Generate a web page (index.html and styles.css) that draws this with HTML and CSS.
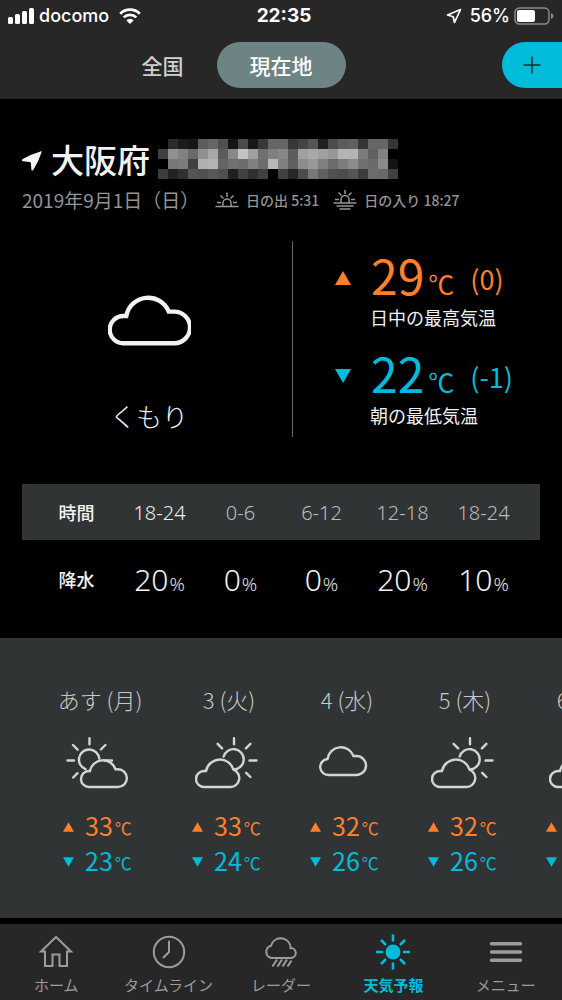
FILE: index.html
```html
<!DOCTYPE html>
<html lang="ja">
<head>
<meta charset="utf-8">
<meta name="viewport" content="width=device-width, initial-scale=1">
<title>天気予報</title>
<link rel="stylesheet" href="styles.css">
</head>
<body>
<svg class="defs" aria-hidden="true">
  <symbol id="cloud-behind-sun" viewBox="3 -1 68 54">
    <g fill="none" stroke="currentColor" stroke-width="2.4" stroke-linecap="round">
      <path d="M31.700 20.500a10.200 10.200 0 1 1 10.500 13"/>
      <path d="M42 2.200v6M25.600 7.800l4.500 4.500M58.400 7.800l-4.500 4.500M57.500 24.500h7M54.200 36.800l4.200 4.200"/>
      <path d="M12 51h26.500a9 9 0 0 0 3-17.400a14.200 14.200 0 0 0-27.500 1.400h-2a8 8 0 0 0 0 16z"/>
    </g>
  </symbol>
  <symbol id="sun-behind-cloud" viewBox="2 -1 68 54">
    <g fill="none" stroke="currentColor" stroke-width="2.4" stroke-linecap="round">
      <path d="M21.500 33.200a10.200 10.200 0 1 1 13.800-10.500"/>
      <path d="M25.500 2.200v6M9 9l4.600 4.600M41.400 9l-4.500 4.500M3.500 24.500h6.500M9.200 41.500l4.300-4.300M41 24.500h7"/>
      <path d="M25 51h29a8.900 8.900 0 0 0 0-17.800h-2.500a13.300 13.300 0 0 0-25.600 1.800h-1a8 8 0 0 0 .1 16z"/>
    </g>
  </symbol>
  <symbol id="small-cloud" viewBox="1 0 68 54">
    <path d="M17 40h27.500a9.500 9.500 0 0 0 0-19h-3a13.500 13.500 0 0 0-26 3a8 8 0 0 0 1.500 16z" fill="none" stroke="currentColor" stroke-width="2.400"/>
  </symbol>
  <symbol id="cloud" viewBox="0 0 84 54">
    <path d="M15.500 50.500H67a16 16 0 0 0 0-32h-5.500a22.500 22.500 0 0 0-43 4.500h-3a13.700 13.700 0 0 0 0 27.500z" fill="none" stroke="currentColor" stroke-width="4.4"/>
  </symbol>
  <symbol id="triangle-up" viewBox="0 0 16 14"><path d="M8 0L16 14H0z" fill="currentColor"/></symbol>
  <symbol id="triangle-down" viewBox="0 0 16 14"><path d="M0 0H16L8 14z" fill="currentColor"/></symbol>
</svg>

<header class="top">
  <div class="status">
    <div class="status-left">
      <svg class="signal" viewBox="0 0 26 16" fill="#fff"><rect x="0" y="9" width="5" height="7" rx="1.500"/><rect x="7" y="6" width="5" height="10" rx="1.500"/><rect x="14" y="3" width="5" height="13" rx="1.500"/><rect x="21" y="0" width="5" height="16" rx="1.500"/></svg>
      <span>docomo</span>
      <svg class="wifi" viewBox="0 0 22 16" fill="none" stroke="#fff" stroke-width="2.700"><path d="M1.200 5.700a14 14 0 0 1 19.600 0M4.700 9.400a9 9 0 0 1 12.600 0"/><path d="M7.300 12.300a5.300 5.300 0 0 1 7.400 0L11 16z" fill="#fff" stroke="none"/></svg>
    </div>
    <strong class="clock">22:35</strong>
    <div class="status-right">
      <svg class="locate" viewBox="0 0 16 16" fill="none" stroke="#fff" stroke-width="1.700" stroke-linejoin="round"><path d="M14.500 1.500L1.500 7L7.200 8.700L8.500 14.500z"/></svg>
      <span>56%</span>
      <svg class="battery" viewBox="0 0 40 18"><rect x="1" y="1" width="34" height="16" rx="4.500" fill="none" stroke="#8b8b8b" stroke-width="1.500"/><rect x="3" y="3" width="18" height="12" rx="2" fill="#fff"/><path d="M37 6v6q2.500-1 2.500-3T37 6z" fill="#8b8b8b"/></svg>
    </div>
  </div>
  <div class="areas">
    <button class="area" type="button">全国</button>
    <button class="area area-on" type="button">現在地</button>
    <button class="add" type="button" aria-label="追加"><svg viewBox="0 0 18 18"><path d="M9 0.500v17M0.500 9h17" stroke="#20282a" stroke-width="1.500"/></svg></button>
  </div>
</header>

<main>
  <section class="today">
    <div class="place">
      <svg class="arrow" viewBox="0 0 20 20" fill="#f4f4f4"><path d="M20 0Q9 3 0 8.500V10l8.700 1.300L9.500 19.500H11Q17 10 20 0z"/></svg>
      <h1>大阪府</h1>
      <svg class="mosaic" viewBox="0 0 24 4" shape-rendering="crispEdges" aria-hidden="true">
        <g><rect x="1" fill="#2b2b2b"/><rect x="2" fill="#1b1b1b"/><rect x="3" fill="#151515"/><rect x="4" fill="#5c5c5c"/><rect x="5" fill="#666"/><rect x="6" fill="#505050"/><rect x="7" fill="#151515"/><rect x="8" fill="#4b4b4b"/><rect x="9" fill="#181818"/><rect x="10" fill="#383838"/><rect x="11" fill="#666"/><rect x="12" fill="#666"/><rect x="13" fill="#383838"/><rect x="14" fill="#444"/><rect x="15" fill="#555"/><rect x="16" fill="#1f1f1f"/><rect x="17" fill="#4c4c4c"/><rect x="18" fill="#5c5c5c"/><rect x="19" fill="#606060"/><rect x="20" fill="#353535"/><rect x="21" fill="#666"/><rect x="22" fill="#666"/><rect x="23" fill="#353535"/></g>
        <g><rect x="0" y="1" fill="#404040"/><rect x="1" y="1" fill="#909090"/><rect x="2" y="1" fill="#828282"/><rect x="3" y="1" fill="#6a6a6a"/><rect x="4" y="1" fill="#909090"/><rect x="5" y="1" fill="#a8a8a8"/><rect x="6" y="1" fill="#5c5c5c"/><rect x="7" y="1" fill="#888"/><rect x="8" y="1" fill="#c4c4c4"/><rect x="9" y="1" fill="#a0a0a0"/><rect x="10" y="1" fill="#707070"/><rect x="11" y="1" fill="#808080"/><rect x="12" y="1" fill="#888"/><rect x="13" y="1" fill="#5c5c5c"/><rect x="14" y="1" fill="#a0a0a0"/><rect x="15" y="1" fill="#a8a8a8"/><rect x="16" y="1" fill="#a0a0a0"/><rect x="17" y="1" fill="#989898"/><rect x="18" y="1" fill="#b5b5b5"/><rect x="19" y="1" fill="#b5b5b5"/><rect x="20" y="1" fill="#7c7c7c"/><rect x="21" y="1" fill="#606060"/><rect x="22" y="1" fill="#808080"/></g>
        <g><rect x="1" y="2" fill="#787878"/><rect x="2" y="2" fill="#7c7c7c"/><rect x="3" y="2" fill="#404040"/><rect x="4" y="2" fill="#b0b0b0"/><rect x="5" y="2" fill="#b4b4b4"/><rect x="6" y="2" fill="#646464"/><rect x="7" y="2" fill="#707070"/><rect x="8" y="2" fill="#6c6c6c"/><rect x="9" y="2" fill="#808080"/><rect x="10" y="2" fill="#6c6c6c"/><rect x="11" y="2" fill="#b8b8b8"/><rect x="12" y="2" fill="#808080"/><rect x="13" y="2" fill="#606060"/><rect x="14" y="2" fill="#8c8c8c"/><rect x="15" y="2" fill="#989898"/><rect x="16" y="2" fill="#808080"/><rect x="17" y="2" fill="#6c6c6c"/><rect x="18" y="2" fill="#7c7c7c"/><rect x="19" y="2" fill="#8c8c8c"/><rect x="20" y="2" fill="#707070"/><rect x="21" y="2" fill="#6a6a6a"/><rect x="22" y="2" fill="#8a8a8a"/><rect x="23" y="2" fill="#141414"/></g>
        <g><rect x="0" y="3" fill="#3c3c3c"/><rect x="1" y="3" fill="#222"/><rect x="2" y="3" fill="#303030"/><rect x="3" y="3" fill="#555"/><rect x="4" y="3" fill="#505050"/><rect x="5" y="3" fill="#585858"/><rect x="6" y="3" fill="#505050"/><rect x="7" y="3" fill="#202020"/><rect x="8" y="3" fill="#404040"/><rect x="9" y="3" fill="#303030"/><rect x="10" y="3" fill="#404040"/><rect x="12" y="3" fill="#404040"/><rect x="13" y="3" fill="#282828"/><rect x="14" y="3" fill="#4c4c4c"/><rect x="15" y="3" fill="#787878"/><rect x="16" y="3" fill="#606060"/><rect x="17" y="3" fill="#505050"/><rect x="18" y="3" fill="#4c4c4c"/><rect x="19" y="3" fill="#555"/><rect x="20" y="3" fill="#3c3c3c"/><rect x="21" y="3" fill="#6c6c6c"/><rect x="22" y="3" fill="#686868"/><rect x="23" y="3" fill="#404040"/></g>
      </svg>
    </div>
    <div class="dateline">
      <span class="date">2019年9月1日（日）</span>
      <span class="sun"><svg viewBox="0 0 24 20" fill="none" stroke="currentColor" stroke-width="1.500"><path d="M0.500 16.500h23M2 12.500h4M18 12.500h4M7 16.500q1.500-1.500 1-3.500a4 4 0 0 1 8 0q-.500 2 1 3.500M12 2.500v4.500M5.500 5.500l3 3M18.500 5.500l-3 3"/></svg>日の出 5:31</span>
      <span class="sun"><svg viewBox="0 0 24 20" fill="none" stroke="currentColor" stroke-width="1.500"><path d="M0.500 13h23M2 9.500h4M18 9.500h4M3.500 16h17M6.500 19h11M7 13q1.500-1.500 1-3.500a4 4 0 0 1 8 0q-.500 2 1 3.500M12 0v4M5.500 2.500l3 3M18.500 2.500l-3 3"/></svg>日の入り 18:27</span>
    </div>
    <div class="now">
      <div class="sky">
        <svg class="big-cloud"><use href="#cloud"/></svg>
        <p>くもり</p>
      </div>
      <div class="temps">
        <div class="temp hot"><svg class="mark"><use href="#triangle-up"/></svg><div><p class="reading"><span class="deg">29</span><span class="unit">℃</span><span class="diff">(0)</span></p><p class="note">日中の最高気温</p></div></div>
        <div class="temp cold"><svg class="mark"><use href="#triangle-down"/></svg><div><p class="reading"><span class="deg">22</span><span class="unit">℃</span><span class="diff">(-1)</span></p><p class="note">朝の最低気温</p></div></div>
      </div>
    </div>
    <table class="rain">
      <thead><tr><th class="label" scope="row">時間</th><th class="first" scope="col">18-24</th><th scope="col">0-6</th><th scope="col">6-12</th><th scope="col">12-18</th><th class="last" scope="col">18-24</th></tr></thead>
      <tbody><tr><th class="label" scope="row">降水</th><td>20<small>%</small></td><td>0<small>%</small></td><td>0<small>%</small></td><td>20<small>%</small></td><td class="last">10<small>%</small></td></tr></tbody>
    </table>
  </section>

  <section class="week">
    <article class="day"><h2>あす (月)</h2><svg class="sky-icon"><use href="#sun-behind-cloud"/></svg>
      <p class="hot"><svg><use href="#triangle-up"/></svg>33<span>℃</span></p><p class="cold"><svg><use href="#triangle-down"/></svg>23<span>℃</span></p></article>
    <article class="day"><h2>3 (火)</h2><svg class="sky-icon"><use href="#cloud-behind-sun"/></svg>
      <p class="hot"><svg><use href="#triangle-up"/></svg>33<span>℃</span></p><p class="cold"><svg><use href="#triangle-down"/></svg>24<span>℃</span></p></article>
    <article class="day"><h2>4 (水)</h2><svg class="sky-icon"><use href="#small-cloud"/></svg>
      <p class="hot"><svg><use href="#triangle-up"/></svg>32<span>℃</span></p><p class="cold"><svg><use href="#triangle-down"/></svg>26<span>℃</span></p></article>
    <article class="day"><h2>5 (木)</h2><svg class="sky-icon"><use href="#cloud-behind-sun"/></svg>
      <p class="hot"><svg><use href="#triangle-up"/></svg>32<span>℃</span></p><p class="cold"><svg><use href="#triangle-down"/></svg>26<span>℃</span></p></article>
    <article class="day"><h2>6 (金)</h2><svg class="sky-icon"><use href="#cloud-behind-sun"/></svg>
      <p class="hot"><svg><use href="#triangle-up"/></svg></p><p class="cold"><svg><use href="#triangle-down"/></svg></p></article>
  </section>
</main>

<nav class="tabs">
  <a href="#home"><svg viewBox="0 0 36 36"><path d="M18 3L3 17.500h4V32h7.500V20.500h7V32H29V17.500h4z"/></svg>ホーム</a>
  <a href="#timeline"><svg viewBox="0 0 36 36"><circle cx="18" cy="18" r="15.200"/><path d="M18 7.500V18l-5.500 5.500" stroke-linecap="round"/></svg>タイムライン</a>
  <a href="#radar"><svg viewBox="0 0 36 36"><path d="M9 24a6.200 6.200 0 0 1-1-12.200a10 10 0 0 1 19.300-.300q.500 1.500.200 2.500a5 5 0 0 1 .500 10zM9.500 32.500l4.500-7M14.500 32.500l4.500-7M19.500 32.500l4.500-7M24.500 32.500l4-6"/></svg>レーダー</a>
  <a class="tab-on" href="#forecast" aria-current="page"><svg viewBox="0 0 36 36"><circle cx="18" cy="18" r="7.500" fill="currentColor" stroke="none"/><path stroke-width="2.600" d="M18 0.500v7M18 28.500v7M1 18h7M28 18h7M6 6l5 5M30 6l-5 5M6 30l5-5M30 30l-5-5"/></svg>天気予報</a>
  <a href="#menu"><svg viewBox="0 0 36 36"><path d="M3.500 9.700h29M3.500 18h29M3.500 26.300h29" stroke-width="3.600" stroke-linecap="round"/></svg>メニュー</a>
</nav>
</body>
</html>
```
FILE: styles.css
```css
* { box-sizing: border-box; }
body {
  margin: 0;
  min-height: 100vh;
  display: flex;
  flex-direction: column;
  background: #000;
  color: #f2f2f2;
  font-family: "Noto Sans", "Noto Sans CJK JP", sans-serif;
  overflow-x: hidden;
}
h1, h2, p { margin: 0; font-weight: 400; }
button { border: 0; padding: 0; font: inherit; color: inherit; }
svg { display: block; flex: none; }
.defs { position: absolute; width: 0; height: 0; }
.hot { color: #ff7f2a; }
.cold { color: #00bcda; }

.top { background: #272727; padding-bottom: 11px; }
.status {
  display: grid;
  grid-template-columns: 1fr auto 1fr;
  align-items: center;
  height: 32px;
  padding: 0 8px;
  margin-bottom: 10px;
  color: #fff;
  font: 500 18px/32px Inter, sans-serif;
}
.status-left, .status-right { display: flex; align-items: center; gap: 5px; }
.status-right { justify-content: flex-end; gap: 4px; }
.clock { font-size: 19px; font-weight: 700; padding-left: 6px; }
.signal { width: 26px; height: 16px; }
.wifi { width: 22px; height: 16px; margin-left: 5px; }
.locate { width: 16px; height: 16px; margin-right: 4px; }
.battery { width: 40px; height: 18px; }

.areas {
  display: grid;
  grid-template-columns: 1fr auto 1fr;
  align-items: center;
  font: 500 21px/44px "Noto Sans CJK JP", sans-serif;
}
.area { background: none; height: 46px; color: #d0d0d0; justify-self: end; margin-right: 33px; }
.area-on { background: #6d8384; color: #fff; border-radius: 23px; padding: 0 33px; margin: 0; }
.add {
  justify-self: end;
  display: flex;
  align-items: center;
  width: 60px;
  height: 46px;
  padding-left: 21px;
  background: #00bcda;
  border-radius: 23px 0 0 23px;
}
.add svg { width: 18px; height: 18px; }

.today { padding: 40px 22px 22px; }
.place { display: flex; align-items: center; height: 40px; }
.arrow { width: 20px; height: 20px; margin: 4px 9px 0 0; }
.place h1 { font: 500 33px/40px "Noto Sans CJK JP", sans-serif; margin-right: 8px; }
.mosaic { width: 240px; height: 40px; }
.mosaic rect { width: 1px; height: 1px; }

.dateline {
  display: flex;
  align-items: center;
  height: 28px;
  margin-top: 7px;
  color: #949494;
  font: 400 14px/28px "Noto Sans CJK JP", sans-serif;
  white-space: nowrap;
}
.date { font-size: 19px; width: 193px; }
.sun { display: flex; align-items: center; gap: 7px; margin-right: 14px; font-weight: 500; }
.sun svg { width: 24px; height: 20px; }

.now { display: grid; grid-template-columns: 271px 1fr; margin-top: 27px; }
.sky {
  display: flex;
  flex-direction: column;
  align-items: center;
  height: 196px;
  padding: 51px 16px 0 0;
  border-right: 1px solid #6a6a6a;
}
.big-cloud { width: 83px; height: 56px; }
.sky p { margin-top: 48px; font: 300 26px/40px "Noto Sans CJK JP", sans-serif; }
.temps { padding-left: 42px; }
.temp { display: flex; gap: 19px; height: 98px; padding-top: 8px; }
.mark { width: 16px; height: 14px; margin-top: 22px; }
.reading {
  display: flex;
  align-items: baseline;
  height: 56px;
  padding-left: 1px;
  font-family: "Noto Sans CJK JP", sans-serif;
  line-height: 50px;
  white-space: nowrap;
}
.deg { font-size: 48px; }
.unit { font-size: 26px; margin-left: 4px; }
.diff { font-size: 27px; margin-left: 16px; padding-bottom: 10px; align-self: flex-end; line-height: 32px; }
.note { color: #f2f2f2; font: 400 18px/24px "Noto Sans CJK JP", sans-serif; }

.rain { width: 100%; margin-top: 47px; border-collapse: collapse; table-layout: fixed; text-align: center; }
.rain th, .rain td { padding: 0; font-weight: 300; white-space: nowrap; }
.rain thead { background: #303434; color: #b8bcbc; font-size: 20px; }
.rain thead tr { height: 56px; }
.rain tbody tr { height: 78px; font-size: 30px; }
.rain .first { color: #f0f0f0; }
.rain .label { width: 97px; padding-left: 12px; color: #f2f2f2; font: 500 18px "Noto Sans CJK JP", sans-serif; }
.rain .last { width: 97px; padding-right: 16px; }
.rain small { font-size: 19px; margin-left: 1px; color: #e0e0e0; }
.today { padding-bottom: 20px; }

.week { display: flex; height: 280px; padding: 43px 0 0 41px; background: #303434; overflow: hidden; }
.day { flex: none; width: 118px; display: flex; flex-direction: column; align-items: center; }
.day:first-child { margin-right: 11px; }
.day h2 { color: #c8c8c8; font: 300 22px/36px "Noto Sans CJK JP", sans-serif; }
.sky-icon { width: 68px; height: 54px; margin: 18px 0 19px; color: #d4d4d4; }
.day p {
  display: flex;
  align-items: center;
  width: 80px;
  height: 35px;
  padding-left: 3px;
  font: 400 25px/35px "Noto Sans CJK JP", sans-serif;
}
.day p svg { width: 11px; height: 10px; margin: 2px 11px 0 0; }
.day p span { font-size: 17px; margin: 4px 0 0 2px; }

.tabs { display: grid; grid-template-columns: repeat(5, 1fr); margin-top: auto; padding: 10px 0 3px; background: #272727; }
.tabs a {
  display: flex;
  flex-direction: column;
  align-items: center;
  color: #9c9c9c;
  font: 400 15px/24px "Noto Sans CJK JP", sans-serif;
  text-decoration: none;
}
.tabs svg { width: 36px; height: 36px; margin-bottom: 3px; fill: none; stroke: currentColor; stroke-width: 2; }
.tabs .tab-on { color: #00bcda; font-weight: 700; }
```
